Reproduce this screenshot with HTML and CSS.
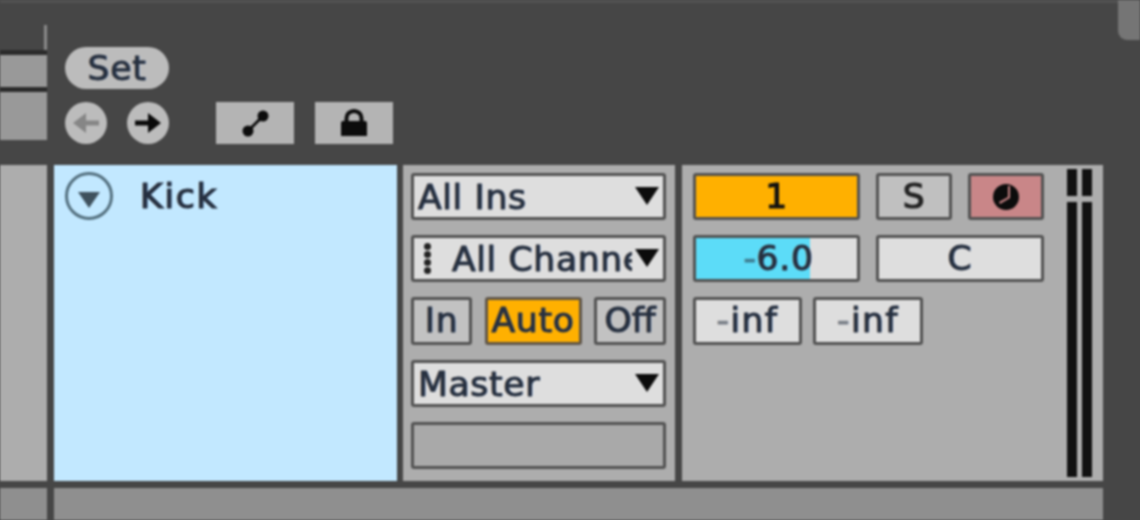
FILE: index.html
```html
<!DOCTYPE html>
<html>
<head>
  <title>Kick track</title>
  <link rel="stylesheet" href="styles.css">
</head>
<body>
  <div class="app">
    <div class="top-row">
      <div class="left-strip">
        <div class="tick"></div>
        <div class="strip-cell first"></div>
        <div class="strip-cell second"></div>
      </div>
      <div class="locators">
        <div class="locator-col">
          <div class="set-btn">Set</div>
          <div class="arrows">
            <div class="round-btn">
              <svg width="28" height="22" viewBox="0 0 28 22"><path d="M1 11 L14 1 V8.5 H27 V13.5 H14 V21 Z" fill="#868686"/></svg>
            </div>
            <div class="round-btn">
              <svg width="28" height="22" viewBox="0 0 28 22"><path d="M27 11 L14 1 V8.5 H1 V13.5 H14 V21 Z" fill="#0a0a0a"/></svg>
            </div>
          </div>
        </div>
        <div class="square-btn">
          <svg width="30" height="30" viewBox="0 0 30 30"><circle cx="8" cy="23" r="5.5" fill="#0c0c0c"/><circle cx="23" cy="8" r="5.5" fill="#0c0c0c"/><path d="M8 23 L23 8" stroke="#0c0c0c" stroke-width="3"/></svg>
        </div>
        <div class="square-btn">
          <svg width="28" height="28" viewBox="0 0 28 28"><path d="M6.5 14 V9 a7.5 7 0 0 1 15 0 V14" fill="none" stroke="#0c0c0c" stroke-width="4"/><path d="M1 14 a2 2 0 0 1 2 -2 H25 a2 2 0 0 1 2 2 V27 H1 Z" fill="#0c0c0c"/></svg>
        </div>
      </div>
      <div class="scroll-thumb"></div>
    </div>

    <div class="main-row">
      <div class="side-cell"></div>
      <div class="track-title">
        <svg class="fold" width="50" height="50" viewBox="0 0 50 50"><circle cx="24" cy="25" r="22.5" fill="none" stroke="#54707f" stroke-width="3"/><path d="M13 21 H35 L24 37 Z" fill="#3f515d"/></svg>
        <span class="track-name">Kick</span>
      </div>

      <div class="io-panel">
        <div class="box select"><span>All Ins</span><i class="caret"></i></div>
        <div class="box select">
          <span class="dots"><b></b><b></b><b></b><b></b></span>
          <span class="channel">All Channe</span><i class="caret"></i>
        </div>
        <div class="monitor">
          <div class="box btn in">In</div>
          <div class="box btn auto">Auto</div>
          <div class="box btn off">Off</div>
        </div>
        <div class="box select"><span>Master</span><i class="caret"></i></div>
        <div class="box empty"></div>
      </div>

      <div class="mix-panel">
        <div class="mix-controls">
          <div class="mix-row">
            <div class="box btn wide orange">1</div>
            <div class="box btn small solo">S</div>
            <div class="box btn small arm">
              <svg width="28" height="28" viewBox="0 0 28 28"><circle cx="14" cy="14" r="13" fill="#0c0c0c"/><path d="M16 3 H18 V15 L8 21 L7 19 L16 14 Z" fill="#c98688"/></svg>
            </div>
          </div>
          <div class="mix-row">
            <div class="box btn wide volume"><span class="vol-fill"></span><span class="vol-text"><span class="dash">-</span>6.0</span></div>
            <div class="box btn pan">C</div>
          </div>
          <div class="mix-row inf-row">
            <div class="box btn inf"><span class="dash">-</span>inf</div>
            <div class="box btn inf"><span class="dash">-</span>inf</div>
          </div>
        </div>
        <div class="meters">
          <div class="meter"><div class="peak"></div><div class="level"></div></div>
          <div class="meter"><div class="peak"></div><div class="level"></div></div>
        </div>
      </div>
    </div>

    <div class="bottom-row">
      <div class="side-cell dim"></div>
      <div class="bottom-fill"></div>
    </div>
  </div>
</body>
</html>
```

FILE: styles.css
```css
* {
  box-sizing: border-box;
}

html, body {
  margin: 0;
  height: 100%;
}

body {
  background-color: #464646;
  overflow: hidden;
}

.app {
  width: 1140px;
  height: 520px;
  display: flex;
  flex-direction: column;
  gap: 7px;
  background-color: #464646;
  font-family: "DejaVu Sans", sans-serif;
  font-size: 34.5px;
  letter-spacing: 0.7px;
  color: #263040;
  -webkit-text-stroke: 0.9px #263040;
  text-shadow: -1px 0 rgba(225, 140, 50, 0.45), 1px 0 rgba(40, 120, 230, 0.45);
  filter: blur(0.8px);
}

/* top area */
.top-row {
  height: 165px;
  display: flex;
  margin-bottom: -7px;
  box-shadow: inset 0 3px 0 #525252;
}

.left-strip {
  width: 47px;
  padding-top: 25px;
  display: flex;
  flex-direction: column;
}

.tick {
  width: 3px;
  height: 25px;
  margin-left: 44px;
  background-color: #8a8a8a;
}

.strip-cell {
  background-color: #999;
  border-top: 5px solid #2b2b2b;
}

.strip-cell.first {
  height: 37px;
}

.strip-cell.second {
  height: 53px;
}

.locators {
  margin-left: 18px;
  padding-top: 47px;
  display: flex;
  align-items: flex-end;
  gap: 21px;
  height: 144px;
}

.locator-col {
  display: flex;
  flex-direction: column;
  gap: 13px;
  width: 104px;
  margin-right: 26px;
}

.set-btn {
  height: 42px;
  border-radius: 21px;
  background-color: #bcbcbc;
  text-align: center;
  line-height: 42px;
}

.arrows {
  display: flex;
  justify-content: space-between;
}

.round-btn {
  width: 42px;
  height: 42px;
  border-radius: 50%;
  background-color: #bcbcbc;
  display: flex;
  align-items: center;
  justify-content: center;
}

.square-btn {
  width: 78px;
  height: 42px;
  background-color: #b4b4b4;
  display: flex;
  align-items: center;
  justify-content: center;
}

.scroll-thumb {
  width: 22px;
  height: 40px;
  margin-left: auto;
  background-color: #757575;
  border-bottom-left-radius: 9px;
}

/* track row */
.main-row {
  height: 316px;
  display: flex;
  width: 1103px;
  gap: 7px;
}

.side-cell {
  width: 47px;
  background-color: #adadad;
}

.side-cell.dim {
  background-color: #8f8f8f;
}

.track-title {
  width: 343px;
  background-color: #c2e8ff;
  padding: 6px 0 0 11px;
  display: flex;
  align-items: flex-start;
  gap: 25px;
}

.track-name {
  margin-top: 5px;
  line-height: 40px;
  letter-spacing: 1.8px;
  -webkit-text-stroke: 1.2px #263040;
}

.io-panel {
  width: 272px;
  margin-left: -1px;
  background-color: #adadad;
  padding: 8px 9px 0 8px;
  display: grid;
  grid-template-rows: 47px 47px 48px 47px 47px;
  row-gap: 15px;
  align-content: start;
}

.box {
  border: 3px solid #525252;
  border-radius: 3px;
  background-color: #dedede;
  line-height: 40px;
}

.select {
  display: flex;
  align-items: center;
  padding: 0 4px;
  position: relative;
}

/* covers the end of a long label, as the arrow does in the reference */
.caret {
  position: absolute;
  right: 0;
  top: 0;
  bottom: 0;
  width: 31px;
  background-color: #dedede;
}

.caret::after {
  content: "";
  position: absolute;
  right: 4px;
  top: 11px;
  border-left: 12px solid transparent;
  border-right: 12px solid transparent;
  border-top: 18px solid #0c0c0c;
}

.dots {
  width: 26px;
  display: flex;
  flex-direction: column;
  align-items: center;
  gap: 1px;
  margin-left: -4px;
}

.dots b {
  width: 7px;
  height: 7px;
  border-radius: 50%;
  background-color: #222;
}

.channel {
  margin-left: 12px;
  white-space: nowrap;
}

.empty {
  background-color: #a9a9a9;
}

.monitor {
  display: flex;
  justify-content: space-between;
}

.btn {
  text-align: center;
  background-color: #c2c2c2;
}

.in {
  width: 61px;
}

.auto {
  width: 97px;
  background-color: #ffb000;
  border-color: #5f5548;
}

.off {
  width: 72px;
  letter-spacing: 0;
  white-space: nowrap;
}

/* mixer */
.mix-panel {
  flex: 1;
  background-color: #adadad;
  padding: 8px 0 0 11px;
  display: flex;
}

.mix-controls {
  width: 351px;
  display: flex;
  flex-direction: column;
  gap: 15px;
}

.mix-row {
  display: flex;
  gap: 16px;
  height: 47px;
}

.inf-row {
  height: 48px;
  gap: 11px;
}

.wide {
  width: 167px;
}

.small {
  width: 76px;
}

.orange {
  background-color: #ffb000;
  color: #111;
  -webkit-text-stroke: 1.2px #111;
  text-shadow: none;
}

.solo {
  background-color: #c0c0c0;
  color: #222;
  -webkit-text-stroke: 1.2px #222;
  text-shadow: none;
}

.arm {
  background-color: #c98688;
  display: flex;
  align-items: center;
  justify-content: center;
}

.volume {
  position: relative;
  background-color: #dedede;
  overflow: hidden;
}

.vol-fill {
  position: absolute;
  left: 0;
  top: 0;
  bottom: 0;
  width: 114px;
  background-color: #5cdcf8;
}

.vol-text {
  position: relative;
  margin-left: 4px;
}

.dash {
  opacity: 0.55;
}

.pan {
  width: 168px;
  background-color: #dedede;
}

.inf {
  width: 109px;
  background-color: #dedede;
  letter-spacing: 1.5px;
}

.inf + .inf {
  width: 110px;
}

.meters {
  margin: -4px 0 0 23px;
  display: flex;
  gap: 5px;
}

.meter {
  width: 10px;
  height: 308px;
  display: flex;
  flex-direction: column;
  gap: 6px;
}

.peak {
  height: 27px;
  background-color: #111;
}

.level {
  flex: 1;
  background-color: #111;
}

/* bottom */
.bottom-row {
  flex: 1;
  display: flex;
  width: 1103px;
  gap: 7px;
}

.bottom-fill {
  flex: 1;
  background-color: #8f8f8f;
}
```
